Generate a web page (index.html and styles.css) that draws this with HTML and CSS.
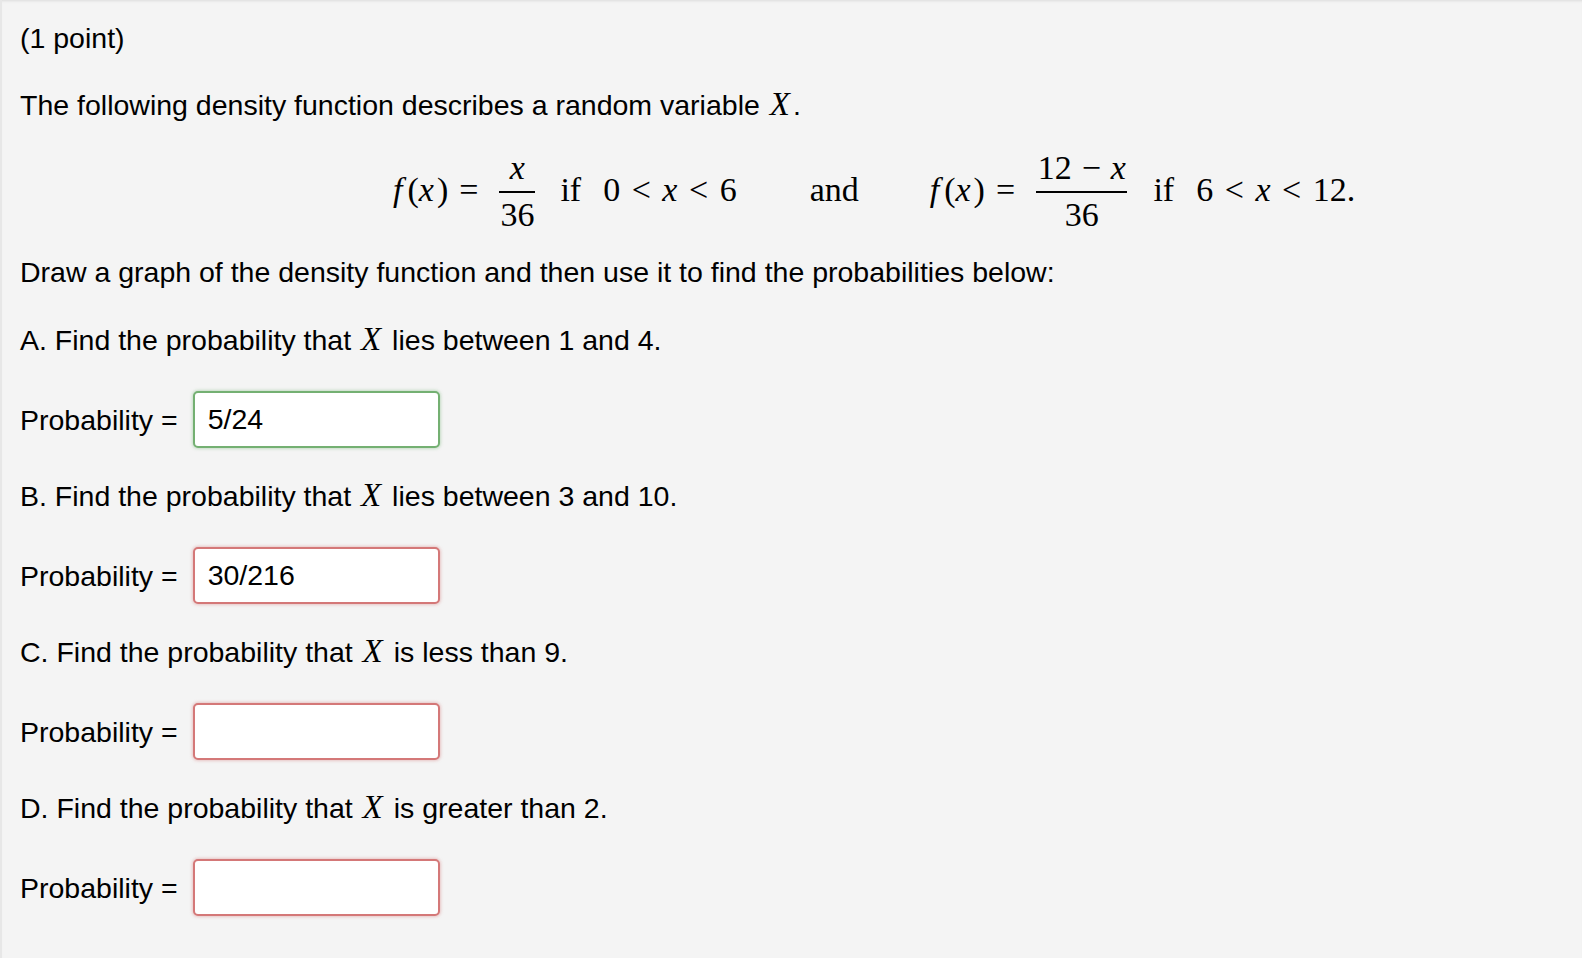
FILE: index.html
```html
<!DOCTYPE html>
<html>
<head>
<meta charset="utf-8">
<link rel="stylesheet" href="styles.css">
</head>
<body>
<div class="page">
  <p class="txt first">(1 point)</p>
  <p class="txt">The following density function describes a random variable <span class="mv">X</span>.</p>

  <div class="display">
    <span class="mgrp fx"><i class="fi">f</i>(<i class="xi">x</i>)</span>
    <span class="mgrp eq">=</span>
    <span class="frac f1">
      <span class="num"><i>x</i></span>
      <span class="den">36</span>
    </span>
    <span class="mgrp kw">if</span>
    <span class="mgrp cond">0<span class="rel">&lt;</span><i>x</i><span class="rel">&lt;</span>6</span>
    <span class="mgrp and">and</span>
    <span class="mgrp fx f2"><i class="fi">f</i>(<i class="xi">x</i>)</span>
    <span class="mgrp eq">=</span>
    <span class="frac f2b">
      <span class="num">12<span class="bin">−</span><i>x</i></span>
      <span class="den">36</span>
    </span>
    <span class="mgrp kw kw2">if</span>
    <span class="mgrp cond">6<span class="rel">&lt;</span><i>x</i><span class="rel">&lt;</span>12.</span>
  </div>

  <p class="txt draw">Draw a graph of the density function and then use it to find the probabilities below:</p>

  <p class="txt q">A. Find the probability that <span class="mv">X</span> lies between 1 and 4.</p>
  <div class="row">
    <span class="lbl">Probability =</span>
    <div class="inp ok">5/24</div>
  </div>

  <p class="txt q">B. Find the probability that <span class="mv">X</span> lies between 3 and 10.</p>
  <div class="row">
    <span class="lbl">Probability =</span>
    <div class="inp bad">30/216</div>
  </div>

  <p class="txt q">C. Find the probability that <span class="mv">X</span> is less than 9.</p>
  <div class="row">
    <span class="lbl">Probability =</span>
    <div class="inp bad"></div>
  </div>

  <p class="txt q">D. Find the probability that <span class="mv">X</span> is greater than 2.</p>
  <div class="row">
    <span class="lbl">Probability =</span>
    <div class="inp bad"></div>
  </div>
</div>
</body>
</html>
```

FILE: styles.css
```css
html, body {
  margin: 0;
  padding: 0;
  background: #f4f4f4;
}
body {
  height: 958px;
  overflow: hidden;
}
.page {
  box-sizing: border-box;
  height: 958px;
  border-left: 2px solid #e7e7e7;
  padding: 22px 0 0 18px;
  box-shadow: inset 0 3px 3px -2px rgba(0,0,0,0.10);
  font-family: "Liberation Sans", Arial, Helvetica, sans-serif;
  font-size: 28.5px;
  color: #000;
}
.txt {
  margin: 0 0 35px 0;
  line-height: 32px;
  height: 32px;
  white-space: nowrap;
}
.txt.draw {
  margin-bottom: 36px;
}
.txt.q {
  margin-bottom: 35px;
}
.mv {
  font-family: "Liberation Serif", "Times New Roman", serif;
  font-style: italic;
  font-size: 33px;
  line-height: 0;
  margin: 0 3px 0 2px;
}

/* display math */
.display {
  display: flex;
  align-items: flex-start;
  height: 81px;
  margin: -5.5px 0 24.5px 0;
  padding-left: 373px;
  font-family: "Liberation Serif", "Times New Roman", serif;
  font-size: 34px;
  line-height: 34px;
  white-space: nowrap;
}
.display i {
  font-style: italic;
}
.mgrp {
  display: block;
  margin-top: 22px;
}
.fi {
  margin-right: 5px;
}
.xi {
  margin-right: 3px;
}
.eq {
  margin-left: 11px;
}
.rel {
  margin: 0 11.5px;
}
.bin {
  margin: 0 10px;
}
.frac {
  display: flex;
  flex-direction: column;
  align-items: center;
  margin-left: 21px;
}
.frac .num {
  display: block;
  align-self: stretch;
  text-align: center;
  padding: 0 1.5px 6.5px;
  border-bottom: 2px solid #000;
}
.frac .den {
  display: block;
  padding: 4.5px 1px 0;
}
.kw {
  margin-left: 25px;
}
.kw2 {
  margin-left: 26px;
}
.cond {
  margin-left: 22px;
}
.and {
  margin-left: 73px;
}
.f2 {
  margin-left: 71px;
}

/* answer rows */
.row {
  display: flex;
  align-items: center;
  height: 57px;
  margin-bottom: 32px;
}
.lbl {
  line-height: 32px;
  margin-right: 15px;
}
.inp {
  box-sizing: border-box;
  width: 247px;
  height: 57px;
  background: #fff;
  border-radius: 5px;
  padding-left: 13px;
  line-height: 53px;
  font-size: 28.5px;
}
.inp.ok {
  border: 2px solid #74b072;
  box-shadow: 0 0 3px 1px rgba(110, 175, 110, 0.35);
}
.inp.bad {
  border: 2px solid #d47878;
  box-shadow: 0 0 3px 1px rgba(210, 110, 110, 0.35);
}
```
